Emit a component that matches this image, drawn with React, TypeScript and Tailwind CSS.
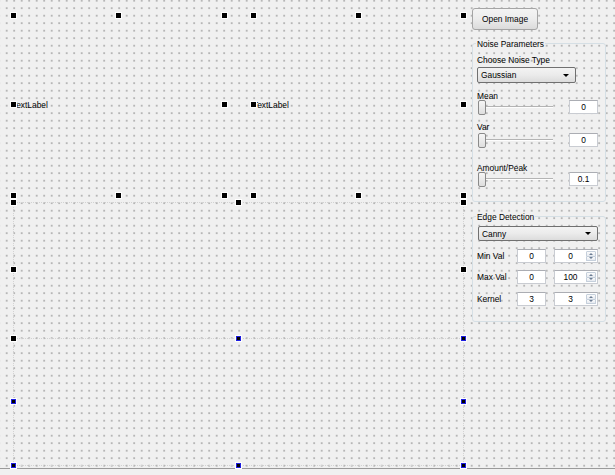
import React from 'react';

function Handle({ pos, blue }: { pos: string; blue?: boolean }) {
  return (
    <span
      className={`absolute w-[5px] h-[5px] bg-black shadow-[0_0_0_1px_#ffffff] ${
        blue ? 'border border-[#1c1ce0]' : ''
      } ${pos}`}
    />
  );
}

function Edit({ value }: { value: string }) {
  return (
    <div className="w-[29px] h-[14px] bg-white border border-[#c9ccd2] border-t-[#abadb3] flex items-center justify-center leading-none pt-px">
      {value}
    </div>
  );
}

function Spin({ value }: { value: string }) {
  return (
    <div className="w-[44px] h-[14px] bg-white border border-[#c9ccd2] border-t-[#abadb3] flex leading-none">
      <div className="flex-1 flex items-center justify-center pt-px">{value}</div>
      <div className="w-[10px] flex flex-col my-px mr-px">
        <div className="flex-1 flex items-center justify-center border border-[#c5cfdb] bg-gradient-to-b from-[#fbfbfb] to-[#e6eaf0] rounded-t-[1px]">
          <span className="w-0 h-0 border-x-[2px] border-x-transparent border-b-[2px] border-b-[#6c7d93]" />
        </div>
        <div className="flex-1 flex items-center justify-center border border-t-0 border-[#c5cfdb] bg-gradient-to-b from-[#fbfbfb] to-[#e6eaf0] rounded-b-[1px]">
          <span className="w-0 h-0 border-x-[2px] border-x-transparent border-t-[2px] border-t-[#6c7d93]" />
        </div>
      </div>
    </div>
  );
}

function Combo({ value, w, h }: { value: string; w: string; h: string }) {
  return (
    <div
      className={`${w} ${h} flex items-center justify-between pl-[3px] pr-[6px] border border-[#707070] rounded-[2px] bg-gradient-to-b from-[#f3f3f3] via-[#ebebeb] to-[#dcdcdc] leading-none`}
    >
      <span className="pt-px">{value}</span>
      <span className="w-0 h-0 border-x-[3px] border-x-transparent border-t-[3px] border-t-black" />
    </div>
  );
}

function Slider() {
  return (
    <div className="relative w-[75px] h-[14px] flex items-center">
      <div className="absolute left-0 right-0 top-[6px] h-[2px] border-t border-[#b4b4b4] border-b border-b-[#fdfdfd]" />
      <div className="relative w-[8px] h-[15px] rounded-[2px] border border-[#8a8a8a] bg-gradient-to-b from-[#f6f6f6] to-[#dedede]" />
    </div>
  );
}

function Group({ title, h, children }: { title: string; h: string; children: React.ReactNode }) {
  return (
    <div className={`relative w-[134px] ${h} border border-[#d5dfe5] rounded-[3px] pl-[4px] flex flex-col`}>
      <span className="absolute left-[3px] top-[-5px] px-px leading-[10px] bg-[#f0f0f0]">{title}</span>
      {children}
    </div>
  );
}

function Label({ text, mt }: { text: string; mt: string }) {
  return <span className={`${mt} h-[10px] leading-[10px] pt-px`}>{text}</span>;
}

function ValRow({ label, a, b, mt }: { label: string; a: string; b: string; mt: string }) {
  return (
    <div className={`flex items-center h-[14px] ${mt}`}>
      <span className="w-[40px] leading-none">{label}</span>
      <Edit value={a} />
      <div className="ml-[8px]">
        <Spin value={b} />
      </div>
    </div>
  );
}

export default function App() {
  return (
    <div className="w-[615px] h-[475px] bg-[#f0f0f0] text-black text-[8.4px] font-['Liberation_Sans',Arial,sans-serif] overflow-hidden">
      <div className="relative h-[469px] border-b border-[#9a9a9a] flex [background-image:radial-gradient(circle,#b3b3b3_0.65px,transparent_0.9px)] [background-size:7.5px_7.5px] [background-position:2.95px_4.45px]">
        {/* form area */}
        <div className="w-[472px] flex pt-[100px] pl-[12px]">
          <div className="w-[241px] leading-[10px] h-[10px]">TextLabel</div>
          <div className="leading-[10px] h-[10px]">TextLabel</div>
        </div>

        {/* side panel */}
        <div className="flex flex-col pt-[8px]">
          <button className="w-[66px] h-[22px] border border-[#a5a5a5] rounded-[3px] bg-gradient-to-b from-[#f4f4f4] via-[#ececec] to-[#dbdbdb] leading-none pt-px">
            Open Image
          </button>

          <div className="mt-[13px]">
            <Group title="Noise Parameters" h="h-[159px]">
              <Label text="Choose Noise Type" mt="mt-[10px]" />
              <div className="mt-[3px]">
                <Combo value="Gaussian" w="w-[99px]" h="h-[16px]" />
              </div>

              <Label text="Mean" mt="mt-[7px]" />
              <div className="flex items-center h-[14px] pl-px">
                <Slider />
                <div className="ml-[16px]">
                  <Edit value="0" />
                </div>
              </div>

              <Label text="Var" mt="mt-[7px]" />
              <div className="flex items-center h-[14px] pl-px mt-[2px]">
                <Slider />
                <div className="ml-[16px]">
                  <Edit value="0" />
                </div>
              </div>

              <Label text="Amount/Peak" mt="mt-[15px]" />
              <div className="flex items-center h-[14px] pl-px">
                <Slider />
                <div className="ml-[16px]">
                  <Edit value="0.1" />
                </div>
              </div>
            </Group>
          </div>

          <div className="mt-[14px]">
            <Group title="Edge Detection" h="h-[106px]">
              <div className="mt-[9px] pl-px">
                <Combo value="Canny" w="w-[120px]" h="h-[15px]" />
              </div>
              <ValRow label="Min Val" a="0" b="0" mt="mt-[8px]" />
              <ValRow label="Max Val" a="0" b="100" mt="mt-[7px]" />
              <ValRow label="Kernel" a="3" b="3" mt="mt-[8px]" />
            </Group>
          </div>
        </div>

        {/* layout outline */}
        <div className="absolute left-[13px] top-[202px] w-[451px] h-[264px] border border-dotted border-[#d2d2d2]" />
        <div className="absolute left-[13px] top-[338px] w-[451px] border-t border-dotted border-[#d2d2d2]" />

        {/* selection handles */}
        <Handle pos="left-[11px] top-[13px]" />
        <Handle pos="left-[116px] top-[13px]" />
        <Handle pos="left-[222px] top-[13px]" />
        <Handle pos="left-[251px] top-[13px]" />
        <Handle pos="left-[356px] top-[13px]" />
        <Handle pos="left-[461px] top-[13px]" />

        <Handle pos="left-[11px] top-[102px]" />
        <Handle pos="left-[222px] top-[102px]" />
        <Handle pos="left-[251px] top-[102px]" />
        <Handle pos="left-[461px] top-[102px]" />

        <Handle pos="left-[11px] top-[193px]" />
        <Handle pos="left-[116px] top-[193px]" />
        <Handle pos="left-[222px] top-[193px]" />
        <Handle pos="left-[251px] top-[193px]" />
        <Handle pos="left-[356px] top-[193px]" />
        <Handle pos="left-[461px] top-[193px]" />

        <Handle pos="left-[11px] top-[200px]" />
        <Handle pos="left-[236px] top-[200px]" />
        <Handle pos="left-[461px] top-[200px]" />

        <Handle pos="left-[11px] top-[267px]" />
        <Handle pos="left-[461px] top-[267px]" />

        <Handle pos="left-[11px] top-[336px]" />
        <Handle pos="left-[236px] top-[336px]" blue />
        <Handle pos="left-[461px] top-[336px]" blue />

        <Handle pos="left-[11px] top-[399px]" blue />
        <Handle pos="left-[461px] top-[399px]" blue />

        <Handle pos="left-[11px] top-[463px]" blue />
        <Handle pos="left-[236px] top-[463px]" blue />
        <Handle pos="left-[461px] top-[463px]" blue />
      </div>
    </div>
  );
}
